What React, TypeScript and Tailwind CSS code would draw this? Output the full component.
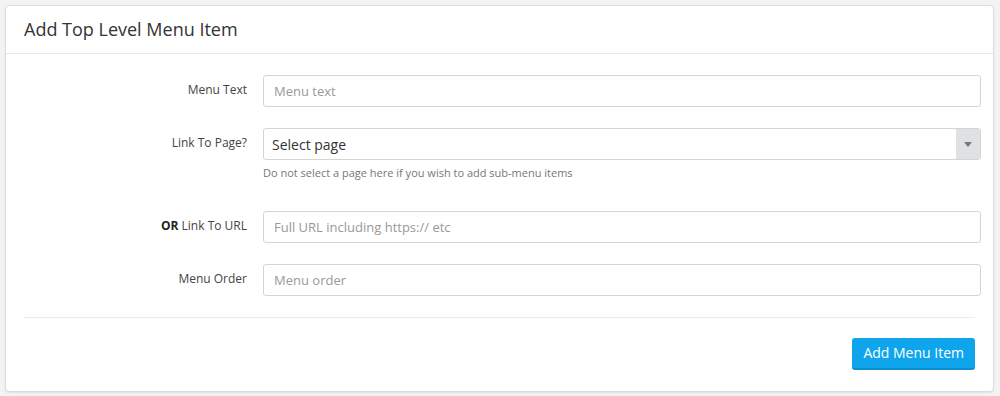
import React from "react";

const font = { fontFamily: '"Open Sans", "Liberation Sans", sans-serif' };

function Row({ label, children }: { label: React.ReactNode; children: React.ReactNode }) {
  return (
    <div className="flex items-center">
      <div className="w-[239px] pr-[16px] pb-[2px] text-right text-[12px] text-[#444]">{label}</div>
      <div className="flex-1">{children}</div>
    </div>
  );
}

export default function App() {
  return (
    <div className="min-h-[396px] w-[1000px] bg-[#f3f3f3] pt-[5px] pl-[5px] pr-[6px]" style={font}>
      <div className="rounded-[4px] border border-[#dcdcdc] bg-white shadow-[0_1px_2px_rgba(0,0,0,0.08)]">
        <div className="flex h-[48px] items-center border-b border-[#e3e6ea] pl-[18px]">
          <h2 className="text-[18px] text-[#333]">Add Top Level Menu Item</h2>
        </div>
        <div className="pt-[21px] pb-[21px] pl-[18px] pr-[12px]">
          <Row label="Menu Text">
            <input
              placeholder="Menu text"
              className="h-[32px] w-full rounded-[3px] border border-[#d5d5d5] px-[10px] text-[13px] text-[#333] placeholder:text-[#999] outline-none"
            />
          </Row>
          <div className="mt-[21px]">
            <Row label="Link To Page?">
              <div className="flex h-[32px] w-full overflow-hidden rounded-[3px] border border-[#d5d5d5]">
                <div className="flex flex-1 items-center px-[8px] text-[14px] text-[#333]">Select page</div>
                <div className="flex w-[24px] items-center justify-center bg-[#dfe1e3]">
                  <svg width="8" height="5" viewBox="0 0 8 5">
                    <path d="M0 0 L8 0 L4 5 Z" fill="#777" />
                  </svg>
                </div>
              </div>
            </Row>
          </div>
          <div className="ml-[239px] mt-[5px] text-[11px] text-[#777]">
            Do not select a page here if you wish to add sub-menu items
          </div>
          <div className="mt-[29px]">
            <Row
              label={
                <span>
                  <b className="font-bold text-[#222]">OR</b> Link To URL
                </span>
              }
            >
              <input
                placeholder="Full URL including https:// etc"
                className="h-[32px] w-full rounded-[3px] border border-[#d5d5d5] px-[10px] text-[13px] text-[#333] placeholder:text-[#999] outline-none"
              />
            </Row>
          </div>
          <div className="mt-[21px]">
            <Row label="Menu Order">
              <input
                placeholder="Menu order"
                className="h-[32px] w-full rounded-[3px] border border-[#d5d5d5] px-[10px] text-[13px] text-[#333] placeholder:text-[#999] outline-none"
              />
            </Row>
          </div>
          <div className="mt-[21px] mr-[6px] border-t border-[#ebebeb]" />
          <div className="mt-[20px] mr-[6px] flex justify-end">
            <button className="h-[32px] rounded-[3px] border-b-2 border-[#0a8fd0] bg-[#0ea5ec] px-[11px] text-[14px] text-white">
              Add Menu Item
            </button>
          </div>
        </div>
      </div>
    </div>
  );
}
